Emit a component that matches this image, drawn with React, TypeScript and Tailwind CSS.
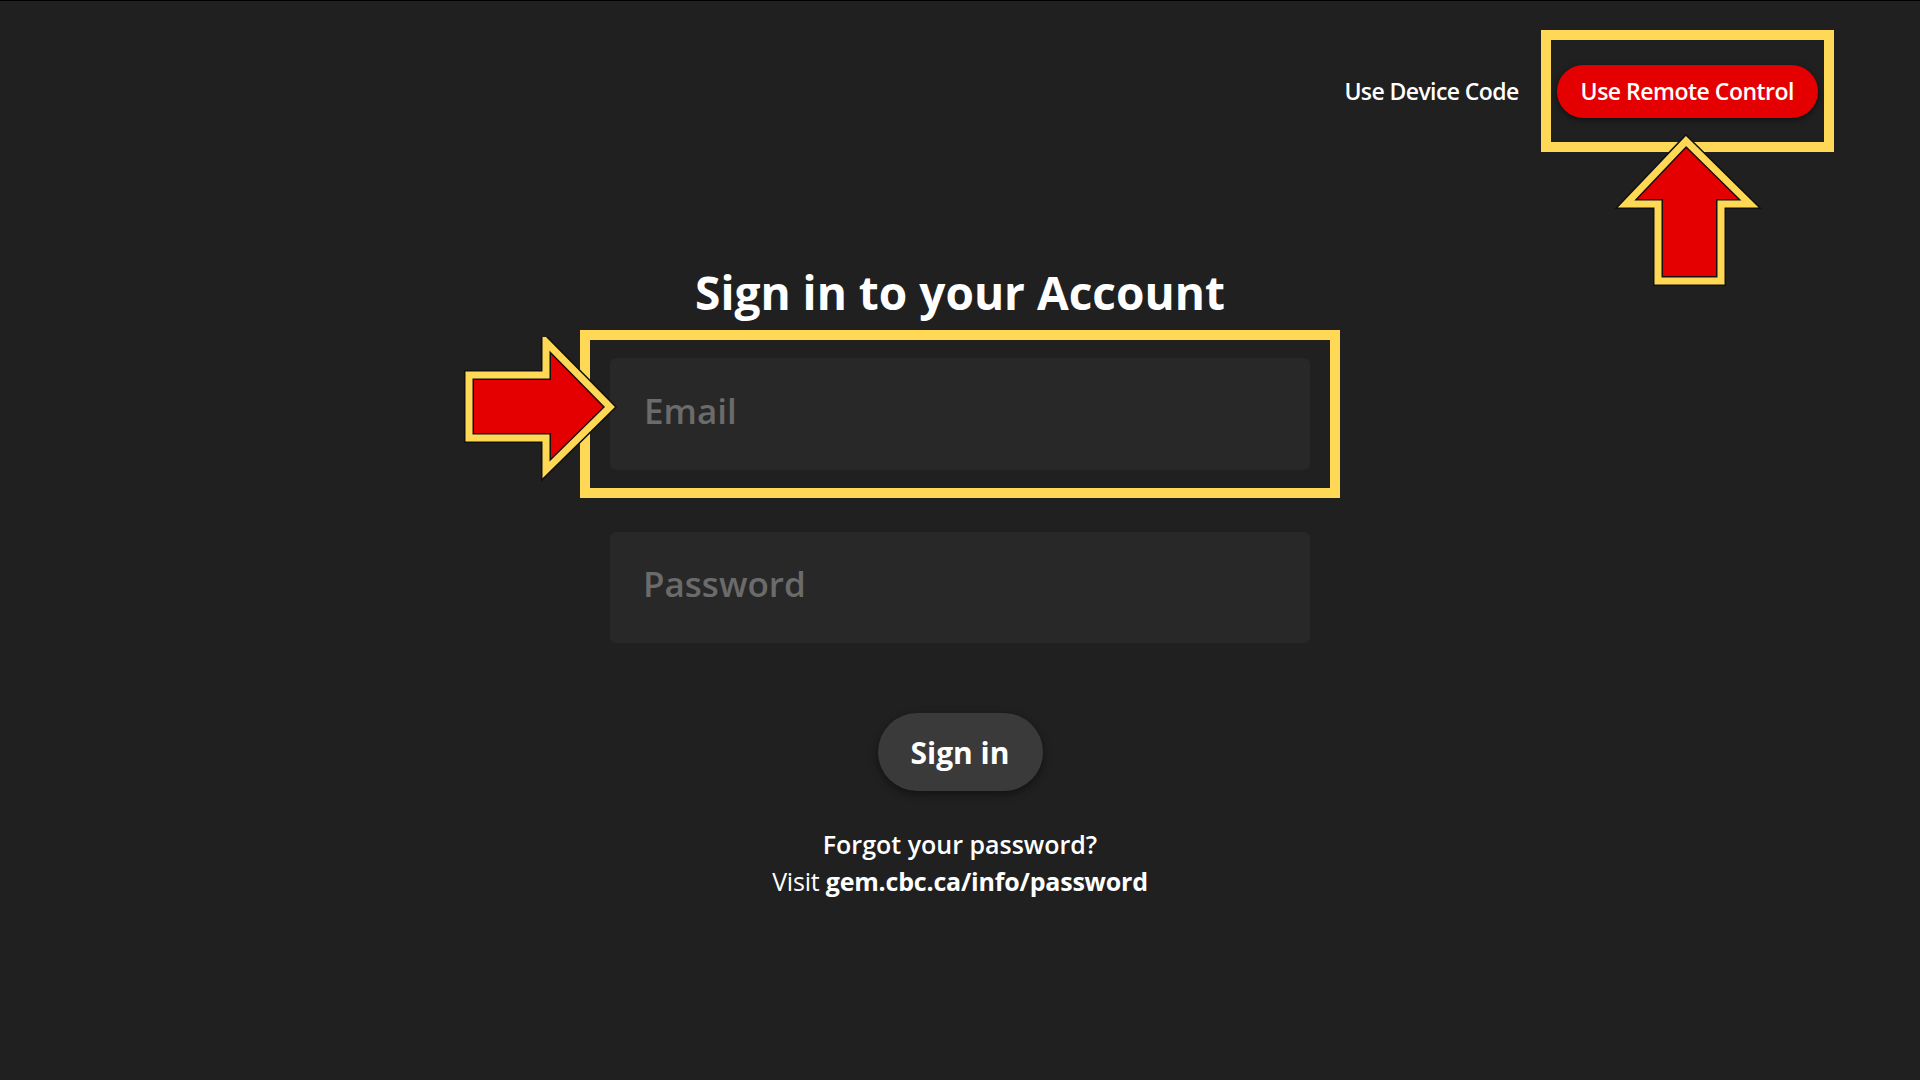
import React from "react";

function UpArrow() {
  // midline of the yellow outline; red fill + black edge drawn under the yellow stroke
  const pts = "33,8 97,71 68,71 68,148 5,148 5,71 -27,71";
  return (
    <svg width="160" height="170" viewBox="-40 0 160 170" className="block">
      <polygon points={pts} fill="#e40000" stroke="#111" strokeWidth="10" strokeLinejoin="miter" strokeMiterlimit="10" />
      <polygon points={pts} fill="none" stroke="#ffd955" strokeWidth="7" strokeLinejoin="miter" strokeMiterlimit="10" />
    </svg>
  );
}

function RightArrow() {
  const pts = "8,38 85,38 85,5 149,70 85,133 85,101 8,101";
  return (
    <svg width="170" height="150" viewBox="0 0 170 150" className="block">
      <polygon points={pts} fill="#e40000" stroke="#111" strokeWidth="10" strokeLinejoin="miter" strokeMiterlimit="10" />
      <polygon points={pts} fill="none" stroke="#ffd955" strokeWidth="7" strokeLinejoin="miter" strokeMiterlimit="10" />
    </svg>
  );
}

export default function App() {
  return (
    <div
      className="relative w-full h-[1080px] overflow-hidden bg-[#202020] border-t border-black text-white"
      style={{ fontFamily: '"Open Sans", "Noto Sans", sans-serif' }}
    >
      <header className="flex justify-end items-center gap-[22px] pt-[29px] pr-[86px]">
        <span className="text-[23px] font-semibold tracking-[-0.6px]">Use Device Code</span>
        <div className="relative border-[10px] border-[#ffd955] px-[6px] pt-[25px] pb-[24px]">
          <button className="h-[53px] px-[24px] rounded-full bg-[#e40000] text-[23px] font-semibold tracking-[-0.5px] shadow-[0_2px_6px_rgba(0,0,0,0.5)]">
            Use Remote Control
          </button>
          <div className="absolute left-1/2 -translate-x-1/2 top-[93px] ml-[6px]">
            <UpArrow />
          </div>
        </div>
      </header>

      <main className="flex flex-col items-center pt-[114px]">
        <h1 className="text-[46px] leading-[52px] font-bold">Sign in to your Account</h1>

        <div className="relative mt-[12px] w-[760px] border-[10px] border-[#ffd955] px-[20px] py-[18px]">
          <div className="absolute left-[-129px] top-[-3px]">
            <RightArrow />
          </div>
          <div className="h-[112px] rounded-[6px] bg-[#282828] flex items-center pl-[34px] pb-[6px] text-[35px] font-semibold text-[#6b6b6b]">
            Email
          </div>
        </div>

        <div className="mt-[34px] w-[700px] h-[111px] rounded-[6px] bg-[#282828] flex items-center pl-[33px] pb-[6px] text-[35px] font-semibold text-[#6b6b6b]">
          Password
        </div>

        <button className="mt-[70px] w-[165px] h-[78px] rounded-full bg-[#3a3a3a] text-[30px] font-bold shadow-[0_3px_8px_rgba(0,0,0,0.45)]">
          Sign in
        </button>

        <div className="mt-[35px] text-center text-[25px] leading-[37px]">
          <p className="font-semibold">Forgot your password?</p>
          <p className="font-medium tracking-[-0.2px]">
            Visit <span className="font-bold">gem.cbc.ca/info/password</span>
          </p>
        </div>
      </main>
    </div>
  );
}
